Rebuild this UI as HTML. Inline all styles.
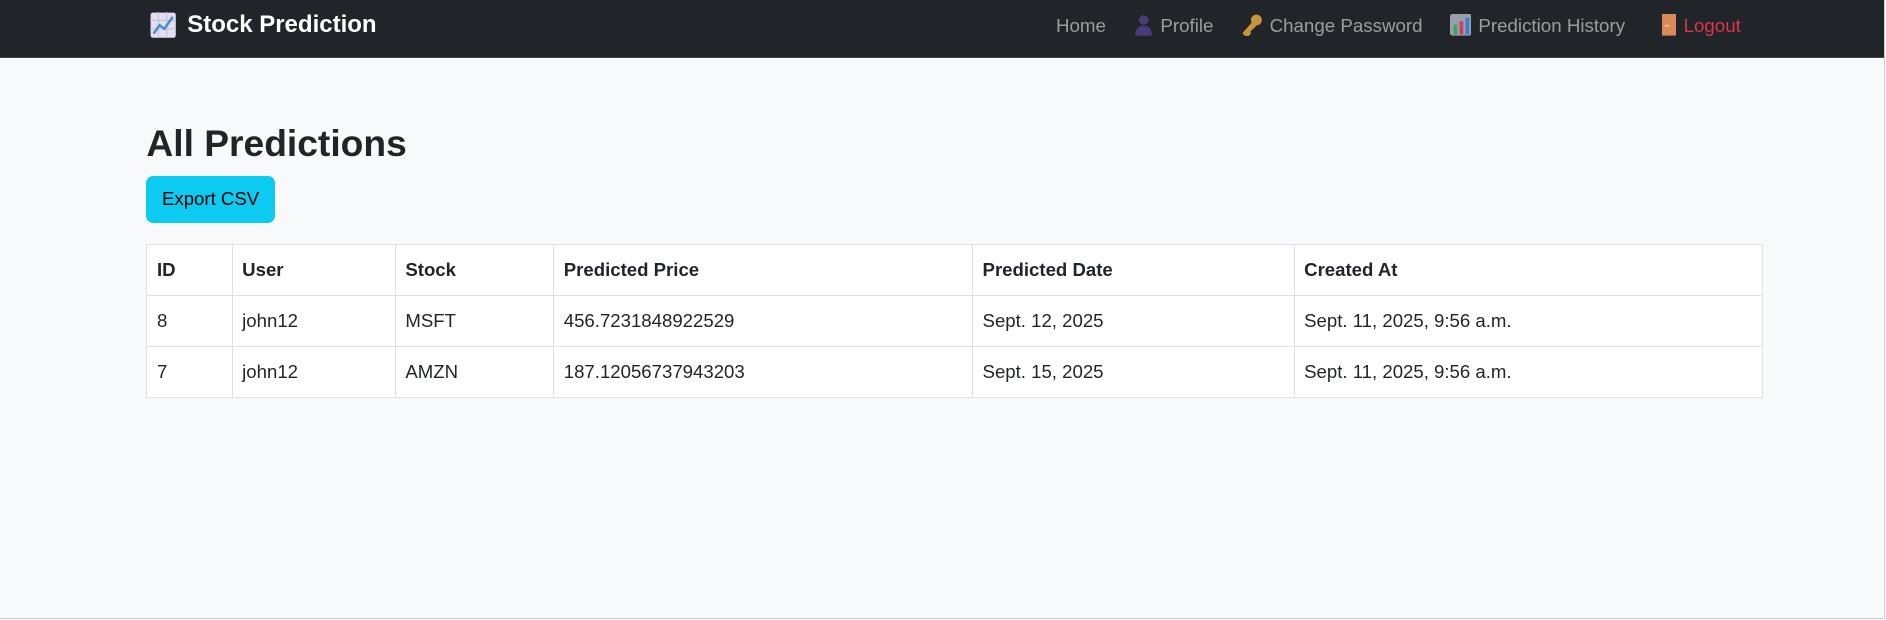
<!DOCTYPE html>
<html><head><meta charset="utf-8"><style>
html,body{margin:0;padding:0;}
body{width:1886px;height:620px;overflow:hidden;background:#f8f9fa;}
#p{zoom:1.2;width:1571px;height:516px;position:relative;font-family:"Liberation Sans",sans-serif;color:#212529;border-right:1px solid #d0d0d0;border-bottom:1px solid #d0d0d0;box-sizing:border-box;background:#f8f9fa;}
.nav{position:absolute;left:0;top:0;width:100%;height:48px;background:#212529;border-bottom:1px solid #444;box-sizing:border-box;}
.brand{position:absolute;left:125px;top:9px;color:#fff;font-weight:bold;font-size:20px;line-height:24px;}
.brand svg{position:absolute;left:0;top:1px}
.brand span{position:absolute;left:31px;white-space:nowrap}
.ni{position:absolute;top:12px;font-size:15.6px;line-height:20px;color:rgba(255,255,255,.55);white-space:nowrap}
.ni svg{vertical-align:-3px;margin-right:6px}
h1{position:absolute;left:122px;top:99px;margin:0;font-size:31px;font-weight:bold;line-height:40px}
.btn{position:absolute;left:122px;top:147px;width:107px;height:39px;background:#0dcaf0;border-radius:6px;font-size:15.5px;line-height:39px;text-align:center;color:#000}
table{position:absolute;left:122px;top:203px;width:1347px;border-collapse:collapse;background:#fff;font-size:15.5px}
td,th{border:1px solid #dee2e6;height:42.5px;padding:0 8px;text-align:left;box-sizing:border-box}
th{font-weight:bold}
</style></head><body><div id="p">
<div class="nav">
<div class="brand"><svg width="22" height="22" viewBox="0 0 22 22"><rect x="0.5" y="0.5" width="21" height="21" rx="2" fill="#e4deef"/><path d="M0 7h22M0 14h22M7 0v22M14 0v22" stroke="#c9c0db" stroke-width="1"/><path d="M3 18l5-7 4 3 7-10" stroke="#3a8fd6" stroke-width="2" fill="none"/></svg><span>Stock Prediction</span></div>
<div class="ni" style="left:880px">Home</div>
<div class="ni" style="left:945px"><svg width="16" height="18" viewBox="0 0 16 18"><circle cx="8" cy="5" r="4" fill="#4b3a7a"/><path d="M1 18c0-6 3-8 7-8s7 2 7 8z" fill="#4b3a7a"/></svg>Profile</div>
<div class="ni" style="left:1035px"><svg width="17" height="18" viewBox="0 0 17 18"><circle cx="12" cy="5" r="4.5" fill="#c8953a"/><path d="M9 8L2 16l2 2 2-2-1-1 2-2 4-4" stroke="#c8953a" stroke-width="2.5" fill="none"/></svg>Change Password</div>
<div class="ni" style="left:1208px"><svg width="18" height="18" viewBox="0 0 18 18"><rect width="18" height="18" rx="2" fill="#9aa0aa"/><rect x="3" y="9" width="3" height="8" fill="#3aa655"/><rect x="8" y="6" width="3" height="11" fill="#d63c5a"/><rect x="13" y="3" width="3" height="14" fill="#3a7fd6"/></svg>Prediction History</div>
<div class="ni" style="left:1385px;color:#dc3545"><svg width="12" height="18" viewBox="0 0 12 18"><rect width="12" height="18" fill="#d98a5a"/><rect x="2" y="9" width="4" height="1.5" fill="#f0c060"/></svg>Logout</div>
</div>
<h1>All Predictions</h1>
<div class="btn">Export CSV</div>
<table>
<tr><th style="width:71px">ID</th><th style="width:136px">User</th><th style="width:132px">Stock</th><th style="width:349px">Predicted Price</th><th style="width:268px">Predicted Date</th><th>Created At</th></tr>
<tr><td>8</td><td>john12</td><td>MSFT</td><td>456.7231848922529</td><td>Sept. 12, 2025</td><td>Sept. 11, 2025, 9:56 a.m.</td></tr>
<tr><td>7</td><td>john12</td><td>AMZN</td><td>187.12056737943203</td><td>Sept. 15, 2025</td><td>Sept. 11, 2025, 9:56 a.m.</td></tr>
</table>
</div></body></html>
